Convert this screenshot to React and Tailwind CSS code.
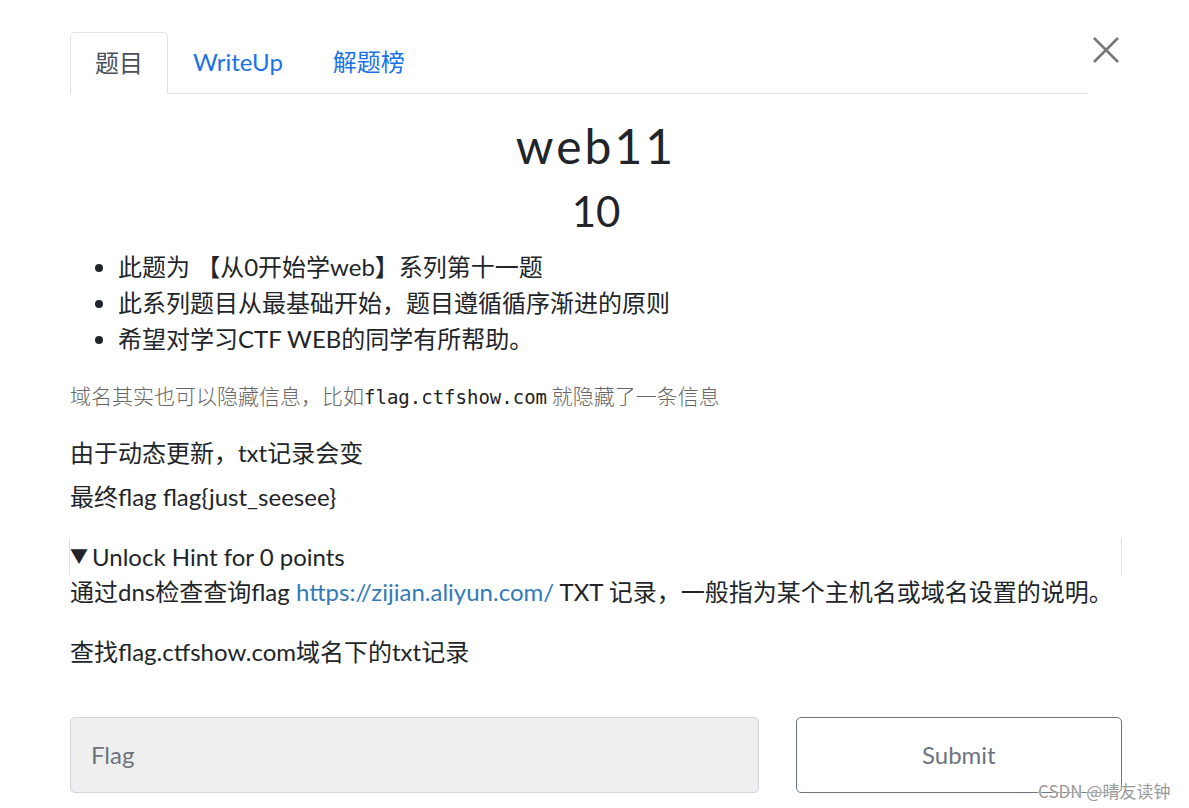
import React from "react";

export default function App() {
  const font = { fontFamily: 'Lato, "Noto Sans CJK SC", sans-serif' };
  return (
    <div className="w-[1189px] h-[808px] bg-white relative overflow-hidden text-[#212529]" style={font}>
      <div className="pl-[70px] pr-[67px] pt-[32px]">
        {/* Tabs */}
        <div className="flex items-end">
          <div className="flex flex-1 items-end border-b border-[#dee2e6] mr-[34px] h-[62px]">
            <div className="h-[62px] w-[98px] border border-b-0 border-[#dee2e6] rounded-t-[5px] bg-white flex items-center justify-center text-[24px] text-[#495057] -mb-px pb-[1px]">
              题目
            </div>
            <div className="h-[62px] flex items-center px-[25px] text-[24px] text-[#1a73e8]">WriteUp</div>
            <div className="h-[62px] flex items-center px-[25px] text-[24px] text-[#1a73e8]">解题榜</div>
          </div>
        </div>
        <svg className="absolute left-[1093px] top-[37px]" width="26" height="26" viewBox="0 0 26 26">
          <path d="M1 1 L25 25 M25 1 L1 25" stroke="#777" strokeWidth="2.6" />
        </svg>

        {/* Title */}
        <div className="text-center mt-[21px] text-[48px] leading-[62px] tracking-[3px] font-normal">web11</div>
        <div className="text-center text-[42px] leading-[58px] mt-[5px]">10</div>

        {/* Bullets */}
        <ul className="list-disc pl-[48px] mt-[9px] text-[24px] leading-[36px]">
          <li>此题为 【从0开始学web】系列第十一题</li>
          <li>此系列题目从最基础开始，题目遵循循序渐进的原则</li>
          <li>希望对学习CTF WEB的同学有所帮助。</li>
        </ul>

        <p className="mt-[23px] text-[21px] leading-[30px] text-[#666] font-light" style={{ fontFamily: '"Noto Sans CJK SC", sans-serif' }}>
          域名其实也可以隐藏信息，比如<span className="text-[19px] text-[#222] font-normal" style={{ fontFamily: '"DejaVu Sans Mono", monospace' }}>flag.ctfshow.com</span>{" "}就隐藏了一条信息
        </p>

        <p className="mt-[23px] text-[24px] leading-[36px]">由于动态更新，txt记录会变</p>
        <p className="mt-[8px] text-[24px] leading-[36px]">最终flag flag{"{"}just_seesee{"}"}</p>

        {/* Hint */}
        <div className="mt-[23px] border-l border-r border-[#dee2e6] h-[37px] flex items-center text-[24px] -ml-px">
          <span className="text-[18px] mr-[4px]">▼</span>Unlock Hint for 0 points
        </div>
        <p className="text-[24px] leading-[36px] -mt-[1px]">
          通过dns检查查询flag <a className="text-[#337ab7]">https://zijian.aliyun.com/</a> TXT 记录，一般指为某个主机名或域名设置的说明。
        </p>
        <p className="text-[24px] leading-[36px] mt-[24px]">查找flag.ctfshow.com域名下的txt记录</p>

        {/* Form */}
        <div className="flex mt-[47px] gap-[37px]">
          <div className="w-[690px] h-[76px] bg-[#efefef] border border-[#ced4da] rounded-[5px] flex items-center pl-[20px] text-[24px] text-[#6c757d]">
            Flag
          </div>
          <div className="w-[327px] h-[76px] border border-[#6c757d] rounded-[5px] flex items-center justify-center text-[24px] text-[#6c757d]">
            Submit
          </div>
        </div>
      </div>
      <div
        className="absolute left-[1038px] top-[778px] text-[17px] text-[#999]"
        style={{ fontFamily: '"Noto Sans CJK SC", sans-serif', textShadow: "0 0 2px #fff, 0 0 2px #fff" }}
      >
        CSDN @晴友读钟
      </div>
    </div>
  );
}
